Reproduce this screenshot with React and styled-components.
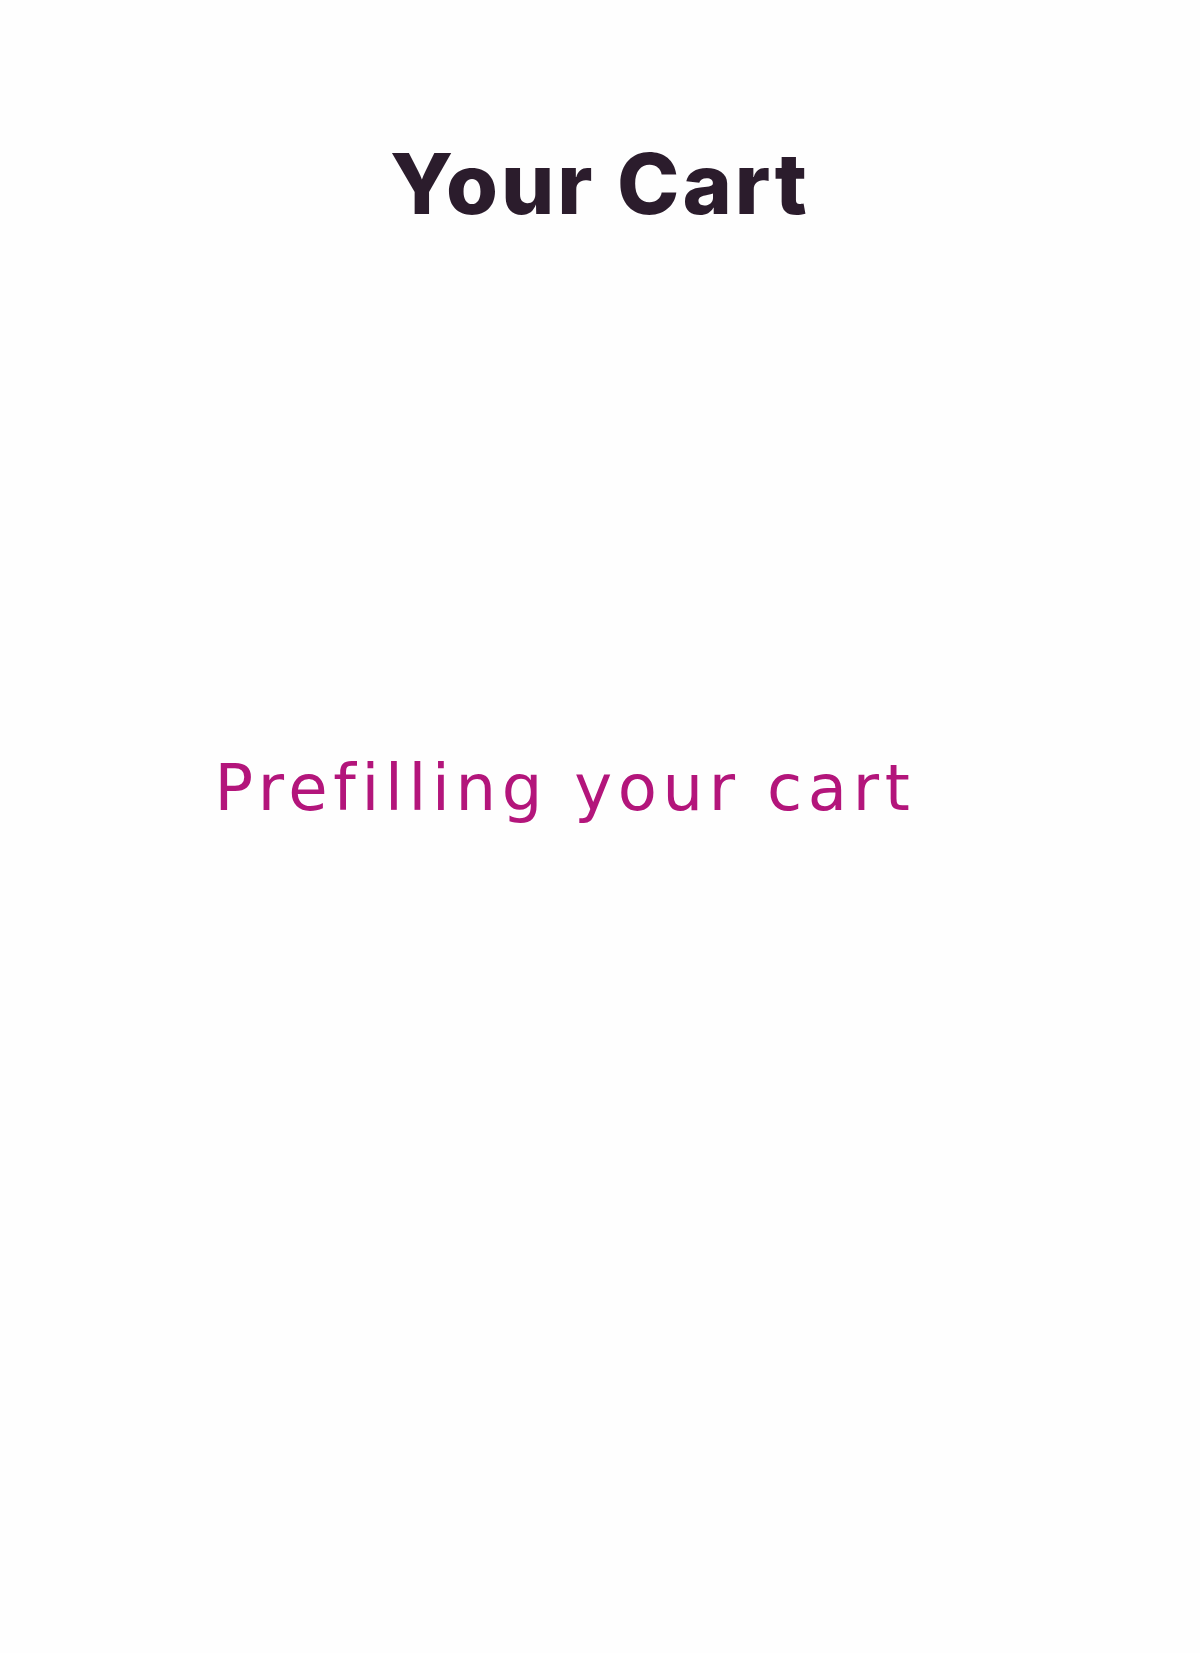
import React from "react";
import styled, { createGlobalStyle } from "styled-components";

const Global = createGlobalStyle`
  html, body { margin: 0; padding: 0; background: #ffffff; }
  #root { min-height: 1653px; }
`;

const Page = styled.main`
  min-height: 1653px;
  display: flex;
  flex-direction: column;
  align-items: center;
  background: #fefefe;
`;

const Title = styled.h1`
  margin: 134px 0 0;
  font-family: "Inter", "Liberation Sans", sans-serif;
  font-weight: 800;
  font-size: 84px;
  line-height: 100px;
  color: #2b1c2c;
  letter-spacing: 3px;
`;

const Status = styled.p`
  margin: 514px 70px 0 0;
  font-family: "DejaVu Sans", "Liberation Sans", sans-serif;
  font-weight: 400;
  font-size: 64px;
  line-height: 80px;
  color: #b3157b;
  letter-spacing: 5.7px;
`;

export default function App() {
  return (
    <>
      <Global />
      <Page>
        <Title>Your Cart</Title>
        <Status>Prefilling your cart</Status>
      </Page>
    </>
  );
}
